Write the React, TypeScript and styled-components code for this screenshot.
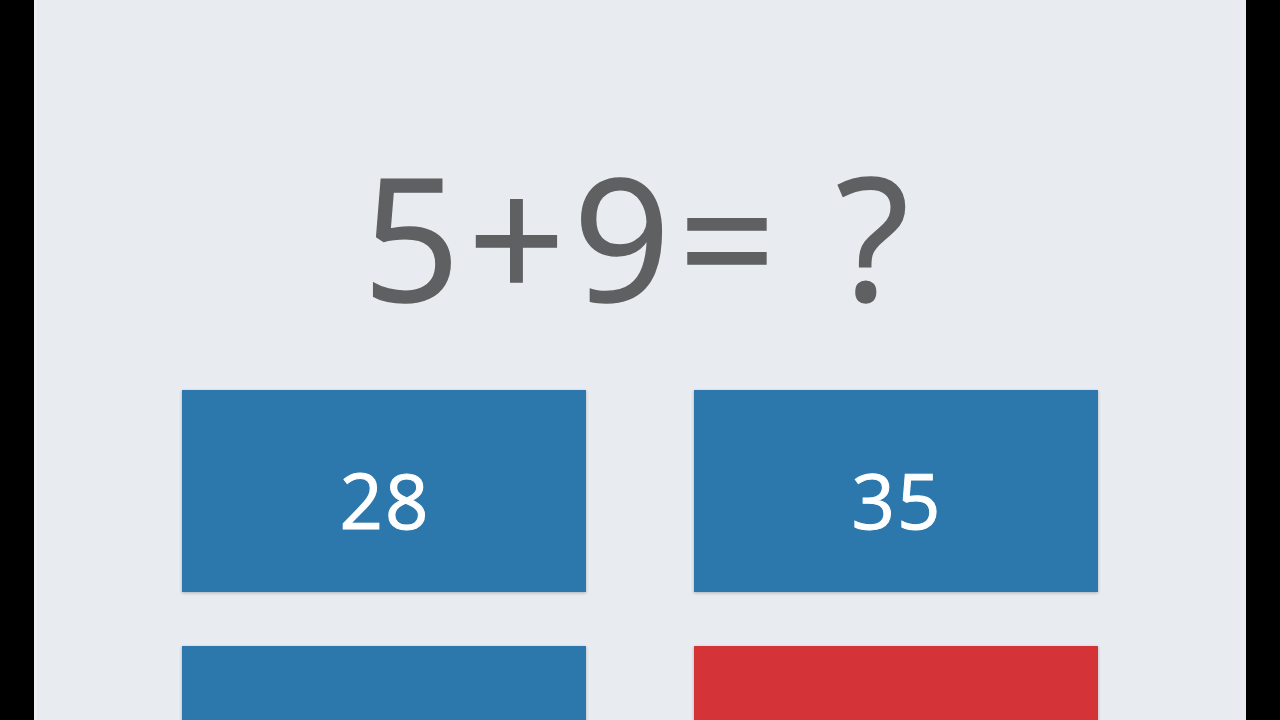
import React from 'react';
import styled, { createGlobalStyle } from 'styled-components';

const GlobalStyle = createGlobalStyle`
  html, body {
    margin: 0;
    padding: 0;
    background: #000;
  }
  body {
    font-family: "Open Sans", Lato, sans-serif;
  }
`;

const answers = [
  { value: '28', tone: 'blue' },
  { value: '35', tone: 'blue' },
  { value: '', tone: 'blue' },
  { value: '', tone: 'red' },
];

const App = () => {
  return (
    <>
      <GlobalStyle />
      <Screen>
        <Question>5+9= ?</Question>
        <AnswerGrid>
          {answers.map((a, i) => (
            <AnswerButton key={i} $tone={a.tone}>
              {a.value}
            </AnswerButton>
          ))}
        </AnswerGrid>
      </Screen>
    </>
  );
};

export default App;

const Screen = styled.main`
  width: 1212px;
  height: 720px;
  margin: 0 auto;
  background-color: #e8ebef;
  box-shadow: inset 3px 0 0 #eef0f2;
  overflow: hidden;
  display: flex;
  flex-direction: column;
  align-items: center;
`;

const Question = styled.h1`
  flex-shrink: 0;
  margin: 150px 0 0;
  height: 240px;
  font-family: "Open Sans", Lato, sans-serif;
  font-weight: 400;
  font-size: 170px;
  line-height: 170px;
  letter-spacing: 8px;
  color: #5f6061;
  -webkit-text-stroke: 1.5px #5f6061;
  white-space: pre;
`;

const AnswerGrid = styled.div`
  flex-shrink: 0;
  display: grid;
  grid-template-columns: 404px 404px;
  grid-auto-rows: 202px;
  column-gap: 108px;
  row-gap: 54px;
`;

const AnswerButton = styled.button<{ $tone: string }>`
  border: none;
  padding: 16px 0 0 2px;
  background-color: ${(p) => (p.$tone === 'red' ? '#d43337' : '#2c77ab')};
  box-shadow: 0 1px 3px rgba(0, 0, 0, 0.25);
  color: #fff;
  font-family: "Open Sans", Lato, sans-serif;
  font-size: 76px;
  font-weight: 400;
  letter-spacing: 2px;
  -webkit-text-stroke: 1px #fff;
  cursor: pointer;
`;
